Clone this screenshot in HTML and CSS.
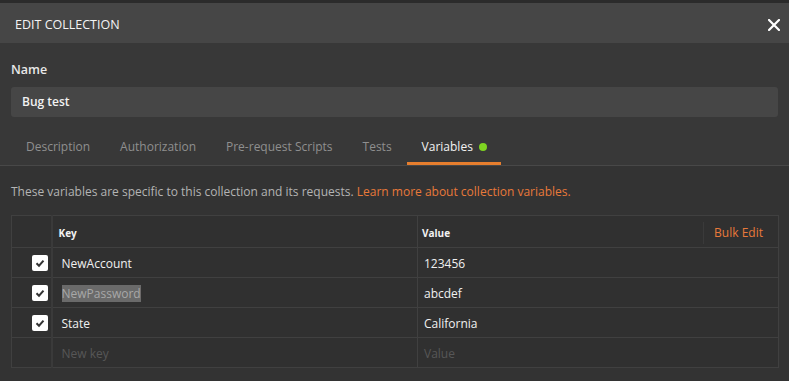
FILE: index.html
```html
<!DOCTYPE html>
<html lang="en">
<head>
    <meta charset="UTF-8">
    <title>Edit Collection</title>
    <link rel="stylesheet" href="styles.css">
</head>
<body>
    <div class="topbar"></div>
    <div class="modal-header">
        <span class="modal-title">EDIT COLLECTION</span>
        <svg class="close" width="12" height="12" viewBox="0 0 12 12">
            <path d="M1 1 L11 11 M11 1 L1 11" stroke="#fff" stroke-width="2.2" stroke-linecap="square"/>
        </svg>
    </div>

    <div class="upper">
        <div class="field-label">Name</div>
        <div class="name-input">Bug test</div>

        <div class="tabs">
            <div class="tab">Description</div>
            <div class="tab">Authorization</div>
            <div class="tab">Pre-request Scripts</div>
            <div class="tab">Tests</div>
            <div class="tab active">Variables <span class="dot"></span></div>
        </div>
    </div>

    <div class="lower">
        <p class="intro">These variables are specific to this collection and its requests. <span class="link">Learn more about collection variables.</span></p>

        <table class="vars">
            <thead>
                <tr>
                    <th class="col-check"></th>
                    <th class="col-key">Key</th>
                    <th class="col-value">
                        <div class="value-head">
                            <span>Value</span>
                            <span class="bulk">Bulk Edit</span>
                        </div>
                    </th>
                </tr>
            </thead>
            <tbody>
                <tr>
                    <td class="col-check"><svg class="box" width="16" height="16" viewBox="0 0 16 16"><rect width="16" height="16" rx="2" fill="#fff"/><path d="M4.5 8.2 L7 10.7 L11.5 5.6" stroke="#333" stroke-width="2" fill="none"/></svg></td>
                    <td>NewAccount</td>
                    <td>123456</td>
                </tr>
                <tr>
                    <td class="col-check"><svg class="box" width="16" height="16" viewBox="0 0 16 16"><rect width="16" height="16" rx="2" fill="#fff"/><path d="M4.5 8.2 L7 10.7 L11.5 5.6" stroke="#333" stroke-width="2" fill="none"/></svg></td>
                    <td><span class="selected">NewPassword</span></td>
                    <td>abcdef</td>
                </tr>
                <tr>
                    <td class="col-check"><svg class="box" width="16" height="16" viewBox="0 0 16 16"><rect width="16" height="16" rx="2" fill="#fff"/><path d="M4.5 8.2 L7 10.7 L11.5 5.6" stroke="#333" stroke-width="2" fill="none"/></svg></td>
                    <td>State</td>
                    <td>California</td>
                </tr>
                <tr class="placeholder">
                    <td class="col-check"></td>
                    <td>New key</td>
                    <td>Value</td>
                </tr>
            </tbody>
        </table>
    </div>
</body>
</html>
```

FILE: styles.css
```css
* {
    margin: 0;
    padding: 0;
    box-sizing: border-box;
}

body {
    font-family: 'Open Sans', 'Noto Sans', sans-serif;
    font-size: 12px;
    color: #f0f0f0;
    background: #333333;
    height: 381px;
    overflow: hidden;
}

.topbar {
    height: 3px;
    background: #2b2b2b;
}

.modal-header {
    height: 40px;
    background: #464646;
    display: flex;
    align-items: center;
    justify-content: space-between;
    padding: 3px 9px 0 15px;
}

.modal-title {
    font-size: 12.5px;
    color: #f4f4f4;
}

.upper {
    background: #383838;
    padding: 19px 11px 0 11px;
    border-bottom: 1px solid #484848;
}

.field-label {
    font-size: 12.5px;
    font-weight: 600;
    color: #e8e8e8;
    line-height: 16px;
}

.name-input {
    margin-top: 9px;
    height: 30px;
    background: #464646;
    border-radius: 3px;
    padding: 0 11px;
    line-height: 30px;
    font-weight: 600;
    color: #f2f2f2;
}

.tabs {
    display: flex;
    margin-top: 13px;
}

.tab {
    height: 35px;
    line-height: 33px;
    padding: 0 15px;
    color: #8f8f8f;
    border-bottom: 3px solid transparent;
}

.tab.active {
    color: #f2f2f2;
    border-bottom-color: #e67e2e;
    padding-right: 14px;
}

.dot {
    display: inline-block;
    width: 8px;
    height: 8px;
    border-radius: 50%;
    background: #7ed321;
    margin-left: 3px;
    vertical-align: 0;
}

.lower {
    padding: 18px 10px 0 11px;
}

.intro {
    color: #b4b4b4;
    line-height: 16px;
}

.link {
    color: #e8793a;
}

.vars {
    margin-top: 15px;
    width: 768px;
    border-collapse: collapse;
    background: #303030;
    table-layout: fixed;
}

.vars th,
.vars td {
    border: 1px solid #404040;
    height: 30px;
    padding: 0 9px;
    text-align: left;
    white-space: nowrap;
}

.vars th {
    height: 32px;
    font-size: 10px;
    font-weight: 700;
    color: #f2f2f2;
    padding-top: 2px;
}

.col-check {
    width: 40px;
}

.vars .col-check {
    padding: 0 0 0 20px;
    border-right: 2px solid #3a3a3a;
}

.col-key {
    width: 366px;
}

.vars th.col-key {
    padding-left: 6px;
}

.vars th.col-value {
    padding-right: 0;
    padding-left: 4px;
}

.value-head {
    display: flex;
    align-items: center;
    justify-content: space-between;
}

.bulk {
    font-size: 12px;
    font-weight: 400;
    color: #e8793a;
    border-left: 1px solid #3a3a3a;
    padding: 3px 15px 3px 10px;
    line-height: 16px;
}

.vars td {
    color: #f0f0f0;
    padding-top: 1px;
}

.vars td + td + td {
    padding-left: 6px;
}

.box {
    display: block;
}

.selected {
    background: #6a6a6a;
    color: #a8a8a8;
}

.placeholder td {
    color: #575757;
}
```
